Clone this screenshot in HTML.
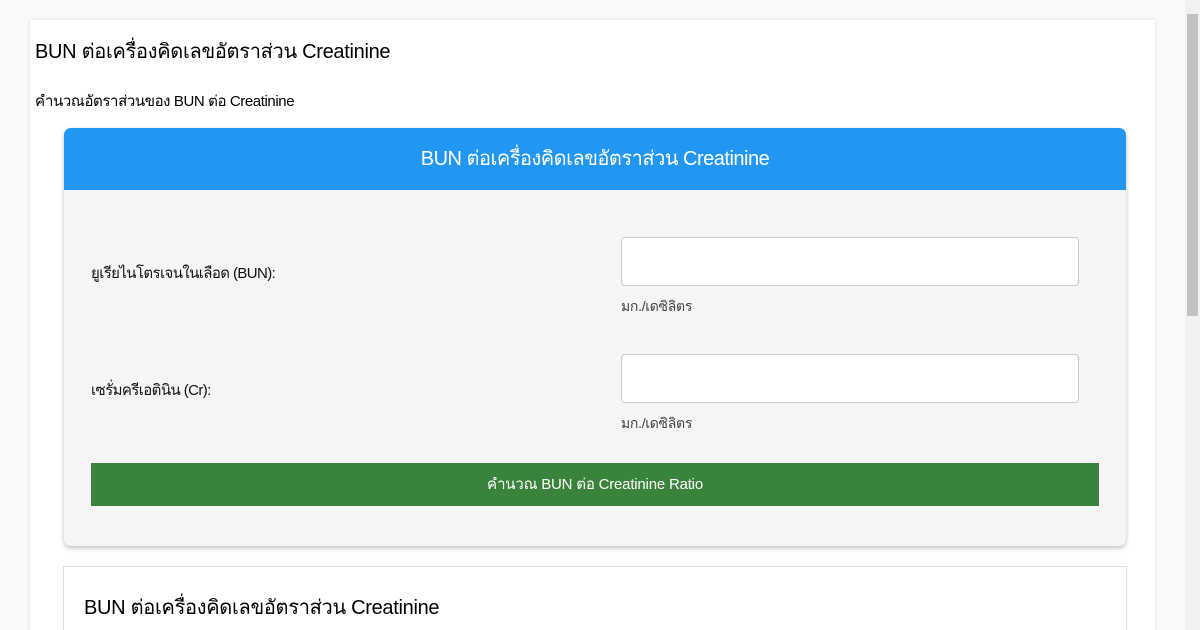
<!DOCTYPE html>
<html style="overflow:hidden;height:630px"><head><meta charset="utf-8"><style>
*{box-sizing:border-box}
body{margin:0;width:1200px;height:630px;overflow:hidden;background:#fafafa;font-family:"Liberation Sans","Noto Sans CJK SC",sans-serif;color:#000;position:relative}
.wrap{position:absolute;left:30px;top:20px;width:1125px;height:610px;background:#fff;box-shadow:0 0 4px rgba(0,0,0,.12);overflow:hidden}
h1{position:absolute;left:5px;top:15px;margin:0;font-size:20px;font-weight:normal;letter-spacing:-0.3px}
.sub{position:absolute;left:5px;top:69px;font-size:15px;letter-spacing:-0.4px}
.card{position:absolute;left:34px;top:108px;width:1062px;height:418px;background:#f5f5f5;border-radius:7px;box-shadow:0 2px 5px rgba(0,0,0,.25);overflow:hidden}
.hd{height:62px;background:#2196f3;color:#fff;font-size:20px;text-align:center;line-height:62px;letter-spacing:-0.5px}
.lbl{position:absolute;left:27px;font-size:15px;color:#111;letter-spacing:-0.6px}
.inp{position:absolute;left:557px;width:458px;height:49px;background:#fff;border:1px solid #ccc;border-radius:4px}
.unit{position:absolute;left:557px;font-size:14px;color:#444;letter-spacing:-0.3px}
.btn{position:absolute;left:27px;top:335px;width:1008px;height:43px;background:#3a833a;color:#fff;font-size:15px;text-align:center;line-height:43px;letter-spacing:-0.2px}
.box2{position:absolute;left:33px;top:546px;width:1064px;height:100px;border:1px solid #ddd;background:#fff}
.box2 div{position:absolute;left:20px;top:24px;font-size:20px;letter-spacing:-0.3px}
.sb{position:absolute;left:1185px;top:0;width:15px;height:630px;background:#f1f1f1}
.th{position:absolute;left:2px;top:14px;width:11px;height:302px;background:#c1c1c1}
</style></head><body>
<div class="wrap">
<h1>BUN ต่อเครื่องคิดเลขอัตราส่วน Creatinine</h1>
<div class="sub">คำนวณอัตราส่วนของ BUN ต่อ Creatinine</div>
<div class="card">
<div class="hd">BUN ต่อเครื่องคิดเลขอัตราส่วน Creatinine</div>
<div class="lbl" style="top:133px">ยูเรียไนโตรเจนในเลือด (BUN):</div>
<div class="inp" style="top:109px"></div>
<div class="unit" style="top:168px">มก./เดซิลิตร</div>
<div class="lbl" style="top:250px">เซรั่มครีเอตินิน (Cr):</div>
<div class="inp" style="top:226px"></div>
<div class="unit" style="top:285px">มก./เดซิลิตร</div>
<div class="btn">คำนวณ BUN ต่อ Creatinine Ratio</div>
</div>
<div class="box2"><div>BUN ต่อเครื่องคิดเลขอัตราส่วน Creatinine</div></div>
</div>
<div class="sb"><div class="th"></div></div>
</body></html>
